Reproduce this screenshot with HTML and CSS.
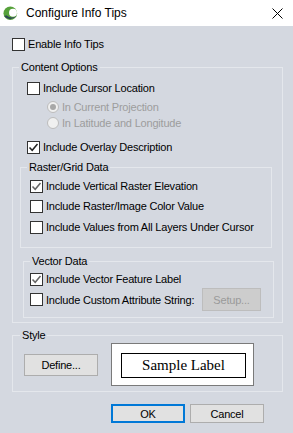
FILE: index.html
```html
<!DOCTYPE html>
<html>
<head>
<meta charset="utf-8">
<link rel="stylesheet" href="styles.css">
</head>
<body>
<div class="window">
  <div class="titlebar">
    <svg class="app-icon" width="15" height="15" viewBox="0 0 15 15">
      <defs>
        <mask id="cut">
          <rect x="0" y="0" width="15" height="15" fill="#fff"/>
          <circle cx="10" cy="6.8" r="4" fill="#000"/>
        </mask>
      </defs>
      <circle cx="7.3" cy="7.3" r="6.8" fill="#56a13a" mask="url(#cut)"/>
      <path d="M1.2 10.2 Q6.5 16.2 14 10 Q8.5 13.2 3.2 9.2 Z" fill="#2e4a55"/>
    </svg>
    <span class="title">Configure Info Tips</span>
    <svg class="close" width="11" height="11" viewBox="0 0 11 11">
      <path d="M0.5 0.5 L10.5 10.5 M10.5 0.5 L0.5 10.5" stroke="#000" stroke-width="1"/>
    </svg>
  </div>

  <div class="dialog">
    <div class="row">
      <span class="cb"></span><span class="label">Enable Info Tips</span>
    </div>

    <fieldset class="group group-content">
      <legend>Content Options</legend>
      <div class="row ind-cursor">
        <span class="cb"></span><span class="label">Include Cursor Location</span>
      </div>
      <div class="row ind-radio r1">
        <span class="radio on"></span><span class="label disabled">In Current Projection</span>
      </div>
      <div class="row ind-radio">
        <span class="radio"></span><span class="label disabled">In Latitude and Longitude</span>
      </div>
      <div class="row ind-cursor overlay">
        <span class="cb checked dark"><svg width="11" height="11" viewBox="0 0 11 11"><path d="M1.5 5.5 L4.2 8.3 L9.5 2" fill="none" stroke="#222" stroke-width="1.5"/></svg></span><span class="label">Include Overlay Description</span>
      </div>

      <fieldset class="group group-raster">
        <legend>Raster/Grid Data</legend>
        <div class="row ind-sub">
          <span class="cb checked"><svg width="11" height="11" viewBox="0 0 11 11"><path d="M1.5 5.5 L4.2 8.3 L9.5 2" fill="none" stroke="#666" stroke-width="1.5"/></svg></span><span class="label">Include Vertical Raster Elevation</span>
        </div>
        <div class="row ind-sub r-gap4">
          <span class="cb"></span><span class="label">Include Raster/Image Color Value</span>
        </div>
        <div class="row ind-sub r-gap5">
          <span class="cb"></span><span class="label">Include Values from All Layers Under Cursor</span>
        </div>
      </fieldset>

      <fieldset class="group group-vector">
        <legend>Vector Data</legend>
        <div class="row">
          <span class="cb checked"><svg width="11" height="11" viewBox="0 0 11 11"><path d="M1.5 5.5 L4.2 8.3 L9.5 2" fill="none" stroke="#666" stroke-width="1.5"/></svg></span><span class="label">Include Vector Feature Label</span>
        </div>
        <div class="row row-setup">
          <span class="cb"></span><span class="label">Include Custom Attribute String:</span>
          <span class="btn btn-disabled btn-setup">Setup...</span>
        </div>
      </fieldset>
    </fieldset>

    <fieldset class="group group-style">
      <legend>Style</legend>
      <div class="style-row">
        <span class="btn btn-define">Define...</span>
        <div class="sample">
          <div class="sample-inner">Sample Label</div>
        </div>
      </div>
    </fieldset>

    <div class="actions">
      <span class="btn btn-action btn-ok">OK</span>
      <span class="btn btn-action">Cancel</span>
    </div>
  </div>
</div>
</body>
</html>
```

FILE: styles.css
```css
html, body {
  margin: 0;
  padding: 0;
}

body {
  width: 293px;
  height: 433px;
  overflow: hidden;
  background: #d4d8e0;
  font-family: "Liberation Sans", Arial, sans-serif;
  font-size: 11px;
  letter-spacing: -0.2px;
  color: #000;
}

.window {
  width: 293px;
  height: 433px;
}

.titlebar {
  height: 26px;
  background: #fff;
  display: flex;
  align-items: center;
}

.app-icon {
  margin-left: 3px;
  margin-top: 1px;
  flex: none;
}

.title {
  margin-left: 8px;
  font-size: 12px;
  letter-spacing: 0;
  flex: 1;
}

.close {
  margin-right: 10px;
  flex: none;
}

.dialog {
  padding: 10px 0 0 12px;
}

.row {
  display: flex;
  align-items: center;
  height: 16px;
  white-space: nowrap;
}

.cb {
  width: 13px;
  height: 13px;
  box-sizing: border-box;
  border: 1px solid #333;
  background: #fff;
  margin-right: 3px;
  flex: none;
  display: flex;
  align-items: center;
  justify-content: center;
}

.cb svg {
  display: block;
}

.radio {
  width: 12px;
  height: 12px;
  box-sizing: border-box;
  border: 1px solid #bcbcbc;
  border-radius: 50%;
  background: #f0f0f0;
  margin-right: 3px;
  flex: none;
  display: flex;
  align-items: center;
  justify-content: center;
}

.radio.on::after {
  content: "";
  width: 6px;
  height: 6px;
  border-radius: 50%;
  background: #a8a8a8;
}

.label.disabled {
  color: #9d9d9d;
}

.group {
  margin: 0;
  border: 1px solid #e4e7ec;
  box-sizing: border-box;
  min-width: 0;
}

.group legend {
  padding: 0 2px;
  line-height: 14px;
  margin: 0;
}

.group-content {
  margin-top: 8px;
  width: 271px;
  padding: 6px 0 4px 6px;
}

.ind-cursor {
  margin-left: 8px;
}

.ind-radio {
  margin-left: 28px;
}

.r1 {
  margin-top: 3px;
}

.overlay {
  margin-top: 8px;
}

.group-raster {
  margin: 5px 0 0 1px;
  width: 252px;
  padding: 4px 0 12px 6px;
}

.ind-sub {
  margin-left: 3px;
}

.r-gap4 {
  margin-top: 4px;
}

.r-gap5 {
  margin-top: 5px;
}

.group-vector {
  margin: 6px 0 0 4px;
  width: 251px;
  padding: 3px 0 6px 6px;
}

.row-setup {
  height: 23px;
  margin-top: 1px;
}

.btn {
  display: flex;
  align-items: center;
  justify-content: center;
  box-sizing: border-box;
  background: #e1e1e1;
  border: 1px solid #adadad;
  white-space: nowrap;
}

.btn-disabled {
  background: #cdcdcd;
  border-color: #bdbdbd;
  color: #9a9a9a;
}

.btn-setup {
  width: 59px;
  height: 23px;
  margin-left: auto;
  margin-right: 12px;
}

.group-style {
  margin-top: 5px;
  width: 271px;
  padding: 1px 0 5px 7px;
}

.style-row {
  display: flex;
  align-items: center;
}

.btn-define {
  width: 74px;
  height: 22px;
  margin-left: 4px;
}

.sample {
  margin-left: 13px;
  width: 143px;
  height: 43px;
  box-sizing: border-box;
  border: 1px solid #7a7a7a;
  background: #fff;
  display: flex;
  align-items: center;
}

.sample-inner {
  margin-left: 9px;
  margin-top: 1px;
  width: 125px;
  height: 25px;
  box-sizing: border-box;
  border: 1px solid #000;
  display: flex;
  align-items: center;
  justify-content: center;
  font-family: "Liberation Serif", "Times New Roman", serif;
  font-size: 15px;
  letter-spacing: 0;
}

.actions {
  display: flex;
  justify-content: flex-end;
  margin-top: 12px;
  margin-right: 29px;
  gap: 5px;
}

.btn-action {
  width: 74px;
  height: 19px;
}

.btn-ok {
  border-color: #0078d7;
  box-shadow: inset 0 0 0 1px #0078d7;
}
```
